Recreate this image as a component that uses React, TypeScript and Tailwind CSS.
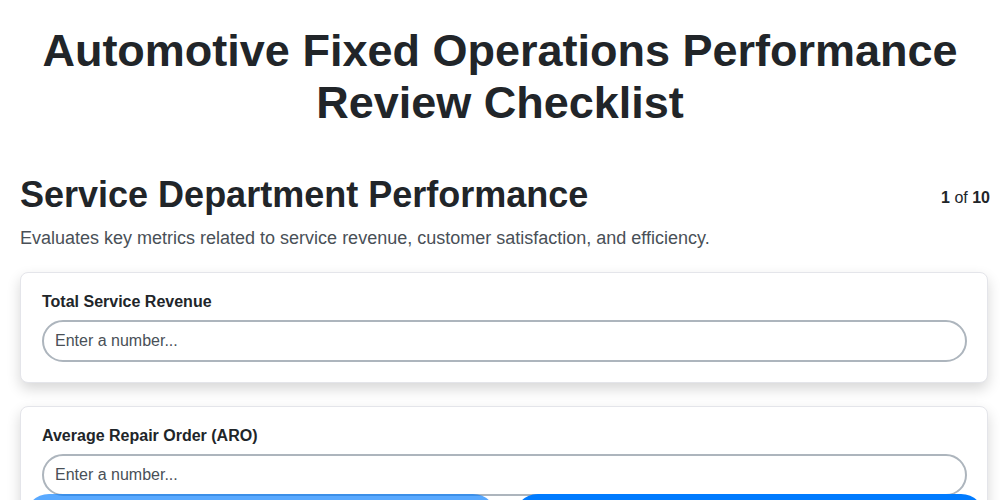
import React, { useState } from 'react';

const fields = [
    { id: 'revenue', label: 'Total Service Revenue' },
    { id: 'aro', label: 'Average Repair Order (ARO)' },
    { id: 'csi', label: 'Customer Satisfaction Index (CSI)' },
];

const FieldCard = ({ label, value, onChange }: { label: string; value: string; onChange: (v: string) => void }) => (
    <div className="bg-white border border-[#e4e5ea] rounded-lg shadow-[0_6px_14px_rgba(0,0,0,0.16)] pl-[21px] pr-[20px] pt-[20px] pb-[20px]">
        <label className="block text-[16px] leading-[18px] font-bold text-[#212529] mb-[9px]">{label}</label>
        <input
            type="text"
            inputMode="decimal"
            value={value}
            onChange={(e) => onChange(e.target.value)}
            placeholder="Enter a number..."
            className="w-full h-[42px] rounded-full border-2 border-[#adb5bd] bg-white px-[11px] text-[16px] text-[#495057] placeholder:text-[#495057] outline-none"
        />
    </div>
);

export default function App() {
    const [values, setValues] = useState<Record<string, string>>({});

    return (
        <div className="min-h-screen bg-white text-[#212529]" style={{ fontFamily: '"Liberation Sans", Arial, sans-serif' }}>
            <h1 className="text-center text-[45px] leading-[52px] font-bold pt-[25px] px-5">
                Automotive Fixed Operations Performance Review Checklist
            </h1>

            <div className="pl-5 pr-[10px] mt-[44px]">
                <div className="flex items-start justify-between">
                    <h2 className="text-[36px] leading-[44px] font-bold">Service Department Performance</h2>
                    <div className="text-[16px] mt-[13px]">
                        <span className="font-bold">1</span> of <span className="font-bold">10</span>
                    </div>
                </div>
                <p className="mt-[10px] text-[18px] leading-[22px] text-[#495057]">
                    Evaluates key metrics related to service revenue, customer satisfaction, and efficiency.
                </p>

                <div className="mt-[23px] pr-[2px] flex flex-col gap-[23px] pb-24">
                    {fields.map((f) => (
                        <FieldCard
                            key={f.id}
                            label={f.label}
                            value={values[f.id] ?? ''}
                            onChange={(v) => setValues((s) => ({ ...s, [f.id]: v }))}
                        />
                    ))}
                </div>
            </div>

            {/* nav buttons sit over the bottom of the list */}
            <div className="fixed left-[25px] right-[15px] top-[494px] grid grid-cols-2 gap-[17px]">
                <button type="button" disabled className="h-[48px] rounded-full bg-[#007bff] opacity-65 text-white font-bold text-[16px]">
                    Previous
                </button>
                <button type="button" className="h-[48px] rounded-full bg-[#007bff] text-white font-bold text-[16px]">
                    Next
                </button>
            </div>
        </div>
    );
}
